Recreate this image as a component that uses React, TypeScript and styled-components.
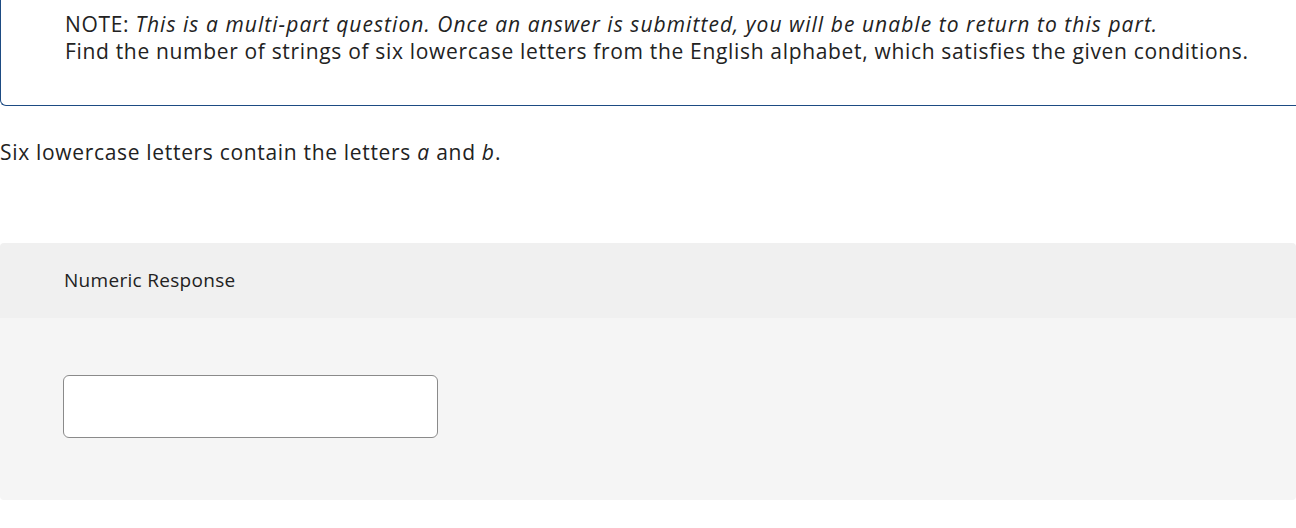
import React from "react";
import styled, { createGlobalStyle } from "styled-components";

const Global = createGlobalStyle`
  html, body { margin: 0; padding: 0; background: #fff; }
  body { font-family: "Open Sans", Lato, sans-serif; color: #222; }
`;

const Page = styled.div`
  width: 1296px;
  display: flex;
  flex-direction: column;
`;

const NoteBox = styled.div`
  height: 106px;
  box-sizing: border-box;
  border-left: 1px solid #1d4b83;
  border-bottom: 1px solid #1d4b83;
  border-bottom-left-radius: 6px;
  padding: 11px 0 0 64px;
  font-size: 21px;
  line-height: 27px;
  letter-spacing: 0.67px;
`;

const Line = styled.div`
  white-space: nowrap;
`;

const Em = styled.em`
  font-style: italic;
  letter-spacing: 1.05px;
`;

const Prompt = styled.p`
  margin: 33px 0 0 0;
  font-size: 21px;
  line-height: 27px;
  letter-spacing: 0.68px;
  white-space: nowrap;
`;

const Panel = styled.section`
  margin-top: 77px;
  border-radius: 4px;
  overflow: hidden;
  display: flex;
  flex-direction: column;
`;

const PanelHeader = styled.div`
  height: 75px;
  box-sizing: border-box;
  background: #f0f0f0;
  display: flex;
  align-items: center;
  padding: 0 0 2px 64px;
  font-size: 19px;
  letter-spacing: 0.3px;
`;

const PanelBody = styled.div`
  height: 182px;
  box-sizing: border-box;
  background: #f5f5f5;
  padding: 57px 0 0 63px;
`;

const Input = styled.input`
  display: block;
  width: 375px;
  height: 63px;
  box-sizing: border-box;
  border: 1px solid #8a8a8a;
  border-radius: 6px;
  background: #fff;
  outline: none;
  font-size: 18px;
`;

export default function App() {
  return (
    <Page>
      <Global />
      <NoteBox>
        <Line>
          NOTE: <Em>This is a multi-part question. Once an answer is submitted, you will be unable to return to this part.</Em>
        </Line>
        <Line>
          Find the number of strings of six lowercase letters from the English alphabet, which satisfies the given conditions.
        </Line>
      </NoteBox>
      <Prompt>
        Six lowercase letters contain the letters <Em>a</Em> and <Em>b</Em>.
      </Prompt>
      <Panel>
        <PanelHeader>Numeric Response</PanelHeader>
        <PanelBody>
          <Input type="text" aria-label="Numeric Response" />
        </PanelBody>
      </Panel>
    </Page>
  );
}
